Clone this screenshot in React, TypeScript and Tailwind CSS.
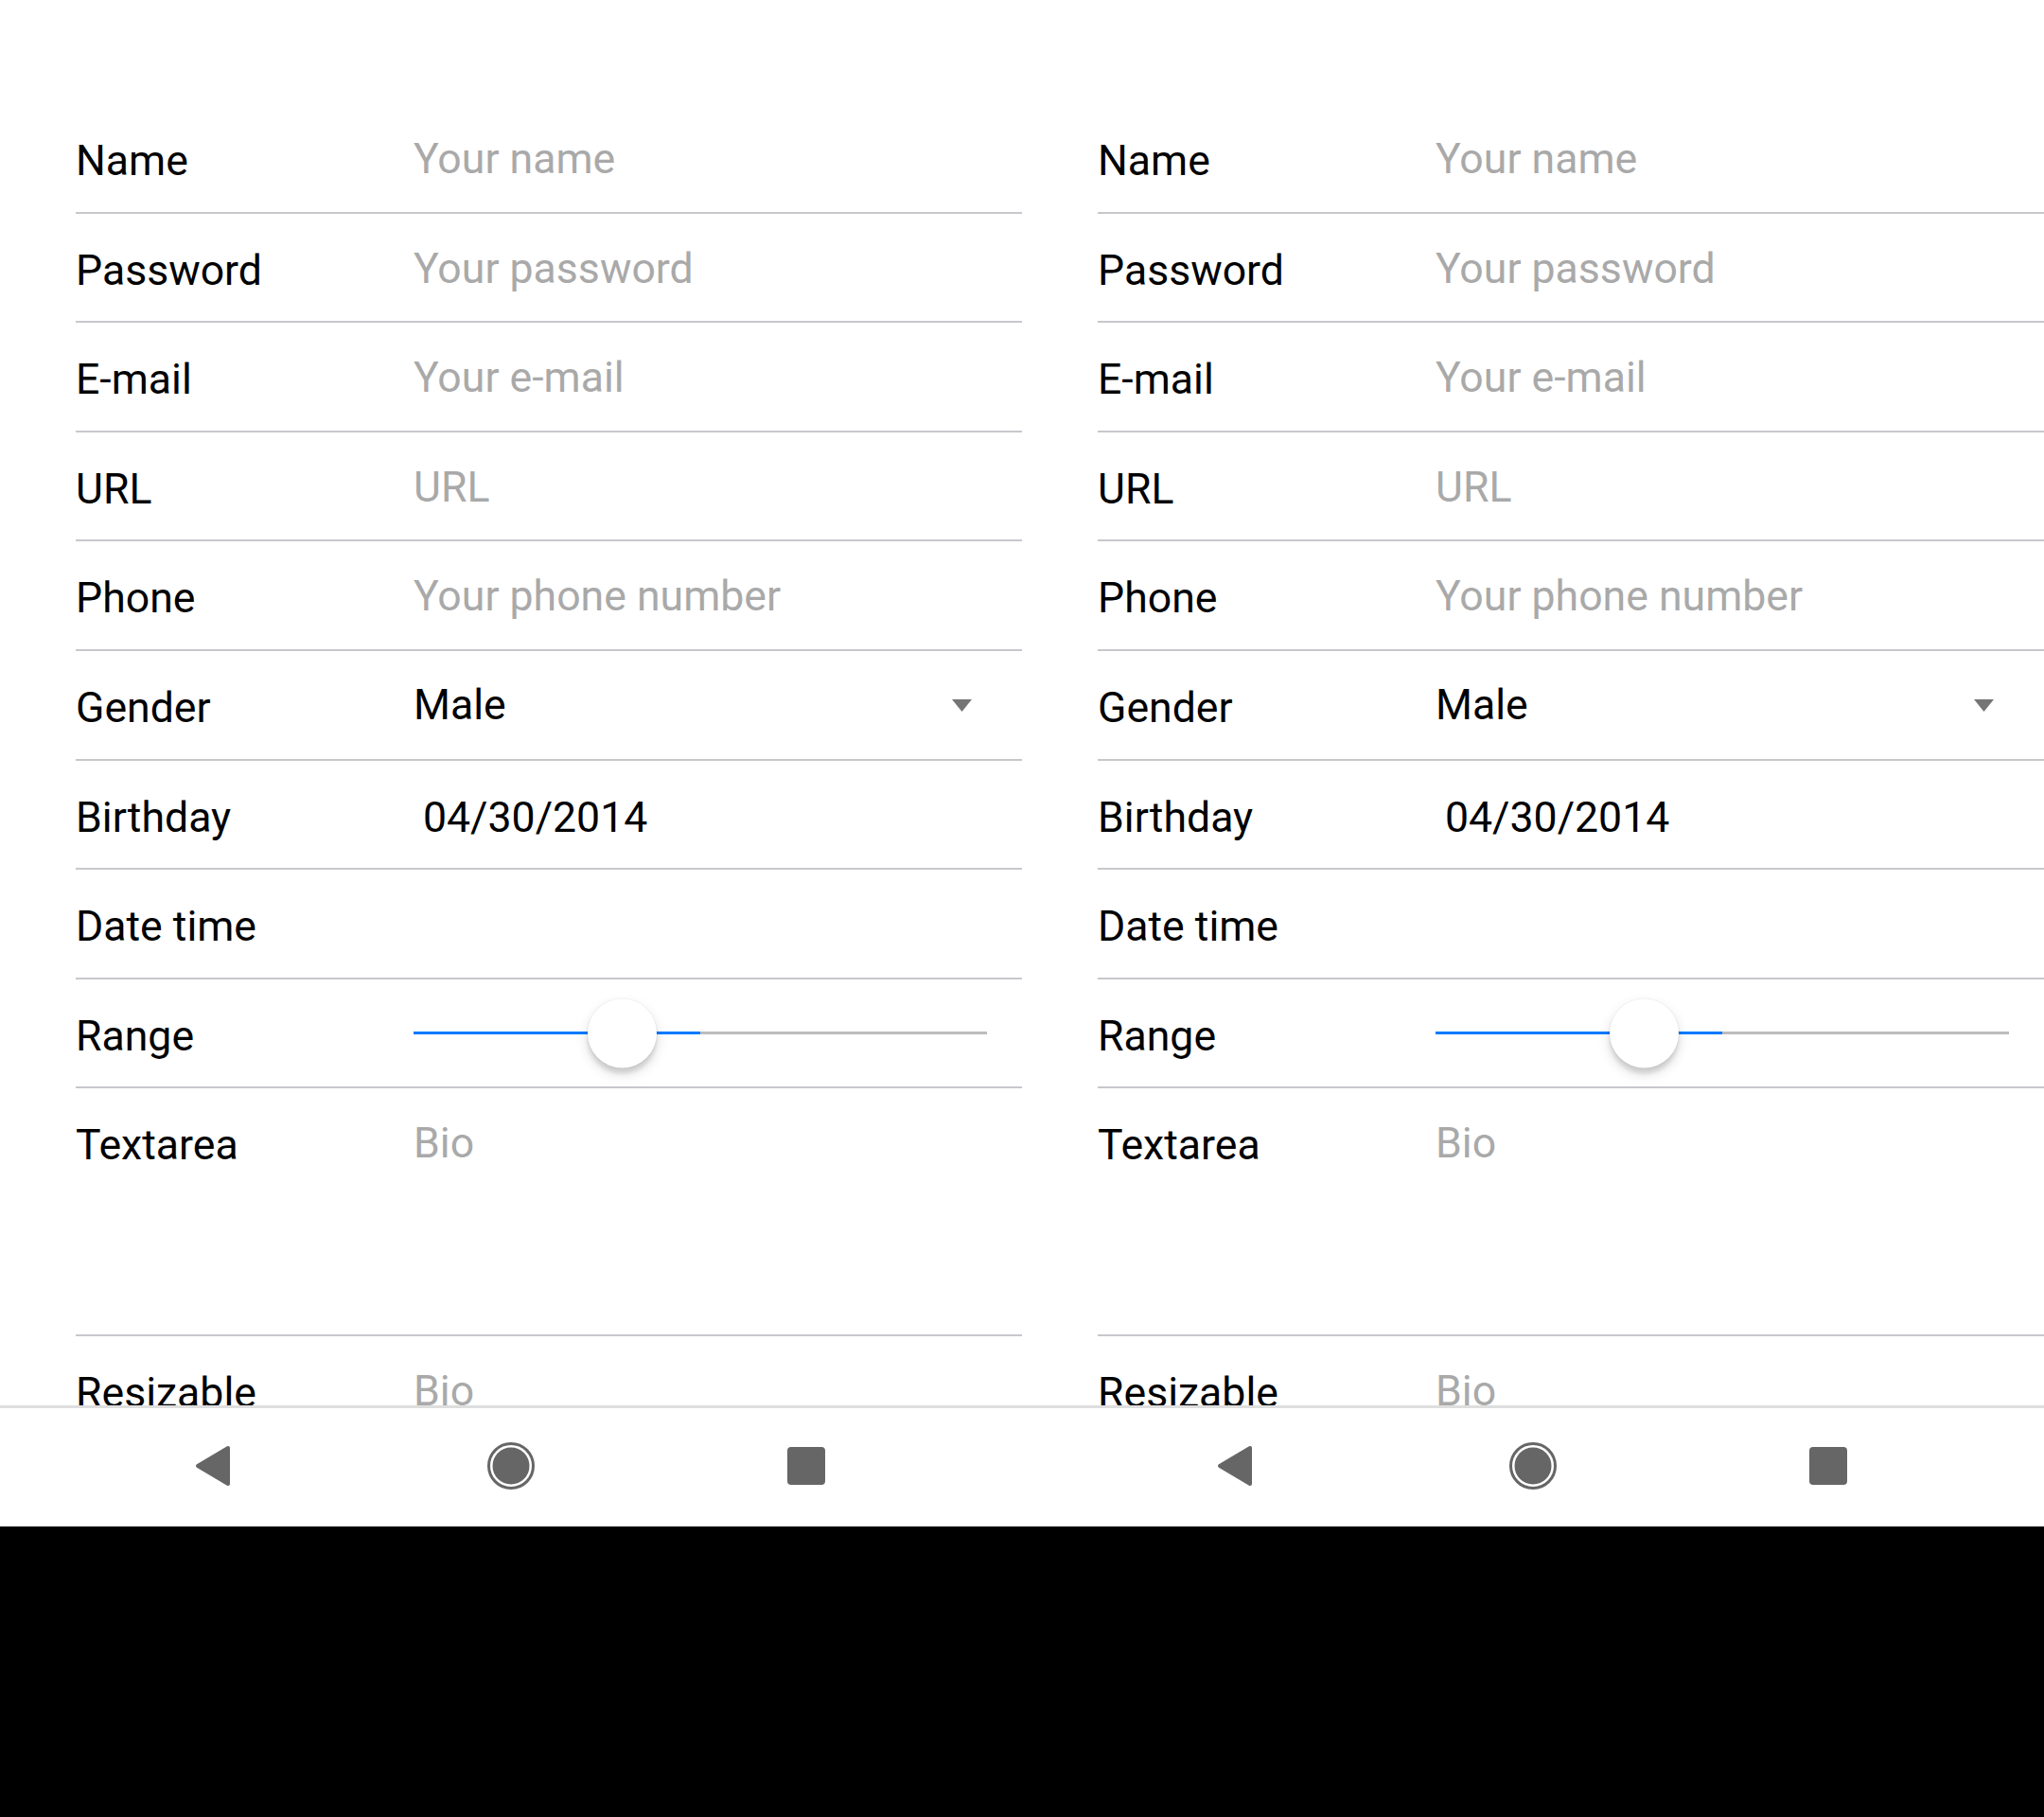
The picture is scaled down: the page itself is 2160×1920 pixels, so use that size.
import React from "react";

const FONT = "font-['Roboto','Liberation_Sans',sans-serif]";

function Row({ label, children, tall }: { label: string; children?: React.ReactNode; tall?: boolean }) {
  return (
    <div
      className={`flex ml-[80px] border-b-2 border-[#c8c7cc] ${tall ? "h-[262px]" : "h-[115.6px]"} shrink-0`}
    >
      <div className="w-[357px] shrink-0 pt-[34px] text-black">{label}</div>
      <div className="flex-1 min-w-0 h-full">{children}</div>
    </div>
  );
}

function Placeholder({ text }: { text: string }) {
  return <div className="pt-[32px] text-[#a9a9a9]">{text}</div>;
}

function Slider() {
  return (
    <div className="h-full flex items-center pr-[37px]">
      <div className="relative w-full h-[2.5px] flex">
        <div className="w-1/2 h-full bg-[#007aff]" />
        <div className="w-1/2 h-full bg-[#bcbcbc]" />
        <div className="absolute left-[183.5px] top-1/2 -translate-y-1/2 w-[73px] h-[73px] rounded-full bg-white shadow-[0_6px_4px_rgba(0,0,0,0.10),0_6px_14px_rgba(0,0,0,0.14),0_0_0_1px_rgba(0,0,0,0.03)]" />
      </div>
    </div>
  );
}

function NavBar() {
  return (
    <div className="h-[125px] shrink-0 border-t-[3px] border-[#dedede] bg-white grid grid-cols-[315px_315px_315px] pl-[67px] items-center justify-items-center">
      <svg width="40" height="46" viewBox="0 0 40 46">
        <path
          d="M36 4 L36 42 L4 23 Z"
          fill="#666666"
          stroke="#666666"
          strokeWidth="4"
          strokeLinejoin="round"
        />
      </svg>
      <svg width="52" height="52" viewBox="0 0 52 52">
        <circle cx="26" cy="26" r="23.5" fill="none" stroke="#666666" strokeWidth="3" />
        <circle cx="26" cy="26" r="19.5" fill="#666666" />
      </svg>
      <div className="w-[40px] h-[40px] rounded-[4px] bg-[#666666] -ml-[6px]" />
    </div>
  );
}

function Panel() {
  return (
    <div className="w-[1080px] h-[1613px] flex flex-col bg-white overflow-hidden">
      <div className="h-[1485px] shrink-0 overflow-hidden pt-[110px] flex flex-col text-[44.6px] leading-[52px]">
        <Row label="Name">
          <Placeholder text="Your name" />
        </Row>
        <Row label="Password">
          <Placeholder text="Your password" />
        </Row>
        <Row label="E-mail">
          <Placeholder text="Your e-mail" />
        </Row>
        <Row label="URL">
          <Placeholder text="URL" />
        </Row>
        <Row label="Phone">
          <Placeholder text="Your phone number" />
        </Row>
        <Row label="Gender">
          <div className="flex justify-between pr-[53px] pt-[31.5px]">
            <span className="text-black">Male</span>
            <svg className="mt-[19.5px]" width="21" height="13" viewBox="0 0 21 13">
              <path d="M0 0 L21 0 L10.5 13 Z" fill="#757575" />
            </svg>
          </div>
        </Row>
        <Row label="Birthday">
          <div className="pt-[34px] pl-[10px] text-black">04/30/2014</div>
        </Row>
        <Row label="Date time" />
        <Row label="Range">
          <Slider />
        </Row>
        <Row label="Textarea" tall>
          <Placeholder text="Bio" />
        </Row>
        <Row label="Resizable">
          <Placeholder text="Bio" />
        </Row>
      </div>
      <NavBar />
    </div>
  );
}

export default function App() {
  return (
    <div className={`w-[2160px] h-[1920px] bg-black flex items-start ${FONT}`}>
      <Panel />
      <Panel />
    </div>
  );
}
